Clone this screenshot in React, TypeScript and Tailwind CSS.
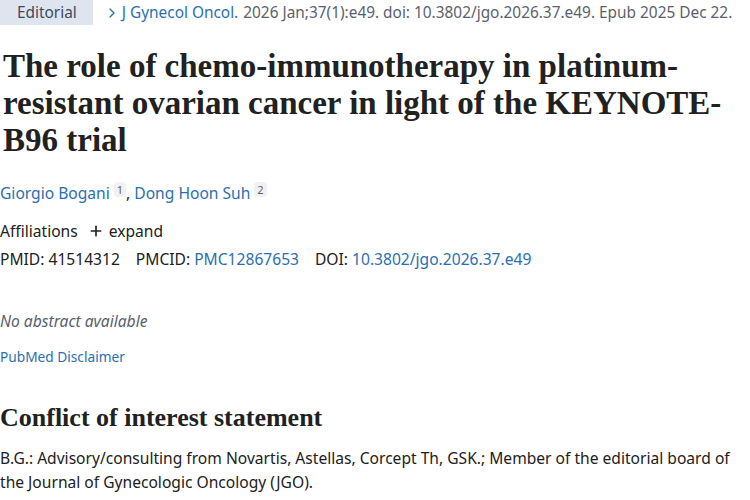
import { ChevronRight, Plus } from 'lucide-react';

const sans = 'font-["Noto_Sans",sans-serif]';
const serif = 'font-["Liberation_Serif",serif]';

function Sup({ n }: { n: string }) {
  return (
    <sup className="ml-1 rounded-sm bg-[#f1f1f1] px-[3px] text-[11px] text-[#5b616b]">{n}</sup>
  );
}

export default function App() {
  return (
    <div className={`${sans} h-[500px] w-[750px] overflow-hidden bg-white text-[15.6px] text-[#212121]`}>
      <div className="flex items-center whitespace-nowrap text-[15.4px] leading-[25px]">
        <span className="bg-[#dfe5ee] pl-[17px] pr-[16px] text-[#3b4a5e]">Editorial</span>
        <ChevronRight className="ml-[11px] h-[16px] w-[16px] text-[#2a6fb0]" strokeWidth={2} />
        <span className="ml-[2px] text-[#2a6fb0]">J Gynecol Oncol.</span>
        <span className="ml-[5px] text-[#5b616b]">2026 Jan;37(1):e49. doi: 10.3802/jgo.2026.37.e49. Epub 2025 Dec 22.</span>
      </div>

      <h1 className={`${serif} mt-[23px] w-[745px] px-[3px] text-[33px] font-bold leading-[37px] text-[#212121]`}>
        The role of chemo-immunotherapy in platinum-resistant ovarian cancer in light of the KEYNOTE-B96 trial
      </h1>

      <div className="mt-[22px] leading-[24px]">
        <a className="text-[#2a6fb0]">Giorgio Bogani</a>
        <Sup n="1" />
        <span>, </span>
        <a className="text-[#2a6fb0]">Dong Hoon Suh</a>
        <Sup n="2" />
      </div>

      <div className="mt-[14px] flex items-center leading-[24px]">
        <span>Affiliations</span>
        <Plus className="ml-[10px] mr-[5px] h-[16px] w-[16px]" strokeWidth={2.5} />
        <span>expand</span>
      </div>

      <div className="mt-[4px] whitespace-nowrap leading-[24px]">
        <span>PMID: 41514312</span>
        <span className="ml-4">PMCID: </span>
        <a className="text-[#2a6fb0]">PMC12867653</a>
        <span className="ml-4">DOI: </span>
        <a className="text-[#2a6fb0]">10.3802/jgo.2026.37.e49</a>
      </div>

      <p className="mt-[38px] italic leading-[24px] text-[#5b616b]">No abstract available</p>

      <p className="mt-[12px] text-[13.7px] leading-[24px] text-[#2a6fb0]">PubMed Disclaimer</p>

      <h2 className={`${serif} mt-[34px] text-[26px] font-bold leading-[30px]`}>Conflict of interest statement</h2>

      <p className="mt-[13px] pr-2 leading-[24px]">
        B.G.: Advisory/consulting from Novartis, Astellas, Corcept Th, GSK.; Member of the editorial board of the
        Journal of Gynecologic Oncology (JGO).
      </p>
    </div>
  );
}
